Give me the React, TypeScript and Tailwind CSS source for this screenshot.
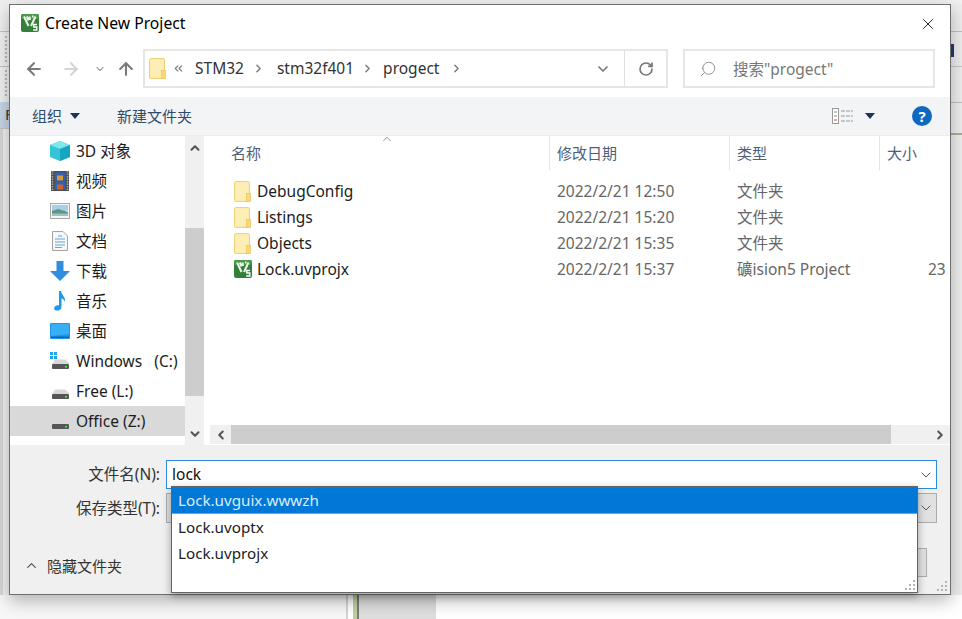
import React from "react";
import { ArrowLeft, ArrowRight, ArrowUp, ChevronDown, ChevronUp, ChevronLeft, ChevronRight, ChevronsLeft, RotateCw, Search, X } from "lucide-react";

const FONT = "font-['Noto_Sans','Noto_Sans_CJK_SC',sans-serif]";

function Folder() {
  return (
    <svg width="17" height="21" viewBox="0 0 17 21" className="shrink-0">
      <rect x="0.5" y="0.5" width="15" height="20" rx="1" fill="#fde9a0" stroke="#f0d27a" />
      <rect x="1.5" y="1.5" width="13" height="18" fill="#fdeeb5" />
      <rect x="12.5" y="12.5" width="4" height="8" fill="#fbd877" stroke="#eec766" strokeWidth="0.8" />
    </svg>
  );
}

function KeilIcon({ size = 18 }: { size?: number }) {
  return (
    <svg width={size} height={size} viewBox="0 0 18 18" className="shrink-0">
      <rect x="0" y="0" width="18" height="18" rx="2" fill="#33803a" />
      <rect x="0" y="0" width="18" height="5" rx="2" fill="#4a9a4a" />
      <path d="M3 2.5 L7.5 12 M5.8 2.5 L7.6 6.5 M8.6 2.5 L9 6 M11 2.5 L12.5 2.5 M14.5 2.5 L10 12" stroke="#eef6ec" strokeWidth="2" fill="none" />
      <path d="M16 10.5 H12.8 V13 H15.8 V16 H12.2" stroke="#ffffff" strokeWidth="1.4" fill="none" />
    </svg>
  );
}

function Cube() {
  return (
    <svg width="20" height="20" viewBox="0 0 20 20">
      <path d="M10 0 L20 4 V16 L10 20 L0 16 V4 Z" fill="#35c3d6" />
      <path d="M10 0 L20 4 L10 8 L0 4 Z" fill="#7fe6ee" />
      <path d="M10 8 L20 4 V16 L10 20 Z" fill="#16a6c4" />
    </svg>
  );
}
function Film() {
  return (
    <svg width="18" height="20" viewBox="0 0 18 20">
      <rect width="18" height="20" fill="#4f4f4f" />
      <path d="M1.5 0 V20 M16.5 0 V20" stroke="#a0a0a0" strokeWidth="1.6" strokeDasharray="1.5 1" />
      <rect x="4" y="1.5" width="10" height="8" fill="#2f62c0" />
      <rect x="4" y="10.5" width="10" height="8" fill="#2f62c0" />
      <rect x="6" y="4.5" width="6" height="5" fill="#d69a36" />
      <rect x="6" y="13.5" width="6" height="5" fill="#c8642f" />
    </svg>
  );
}
function Picture() {
  return (
    <svg width="20" height="16" viewBox="0 0 20 16">
      <rect x="0.5" y="0.5" width="19" height="15" fill="#f4f4f4" stroke="#a9a9a9" />
      <rect x="2" y="2" width="16" height="6" fill="#a8cfe8" />
      <path d="M2 8 L8 6 L18 9 V13 H2 Z" fill="#5f9482" />
      <rect x="2" y="10.5" width="16" height="2.5" fill="#9cc4c0" />
    </svg>
  );
}
function Doc() {
  return (
    <svg width="16" height="20" viewBox="0 0 16 20">
      <path d="M0.5 0.5 H11 L15.5 5 V19.5 H0.5 Z" fill="#f7f7f7" stroke="#a5a5a5" />
      <path d="M6 5 H10 M3 8 H13 M3 11 H13 M3 14 H13 M3 16.5 H10" stroke="#5aa8e0" strokeWidth="1.2" />
    </svg>
  );
}
function Download() {
  return (
    <svg width="20" height="20" viewBox="0 0 20 20">
      <path d="M6.5 0 H13.5 V10 H20 L10 20 L0 10 H6.5 Z" fill="#2f8fde" />
    </svg>
  );
}
function Music() {
  return (
    <svg width="16" height="20" viewBox="0 0 16 20">
      <path d="M7 0 H9 C9.5 4 14 6 13 11 C12 8 10.5 8 9.5 7.5 V16 C9.5 19 6 20 4 19.5 C1.5 19 1.5 15.5 4.5 14.5 C5.5 14.2 6.5 14.3 7 14.6 Z" fill="#1f9ae8" />
    </svg>
  );
}
function Desktop() {
  return (
    <svg width="20" height="16" viewBox="0 0 20 16">
      <rect width="20" height="16" rx="1" fill="#1d97ea" />
      <path d="M1 1 H19 V11 L1 13 Z" fill="#38aef5" />
      <rect x="1" y="13.5" width="18" height="1.5" fill="#0b67b0" />
    </svg>
  );
}
function Drive({ win }: { win?: boolean }) {
  return (
    <svg width="20" height="18" viewBox="0 0 20 18">
      {win && (
        <g fill="#20a4ee">
          <rect x="0" y="0" width="3" height="3" />
          <rect x="4" y="0" width="3" height="3" />
          <rect x="0" y="4" width="3" height="3" />
          <rect x="4" y="4" width="3" height="3" />
        </g>
      )}
      <path d="M3 11 L5 7.5 H15 L19 11 V12 H2 Z" fill="#d8d8d8" />
      <rect x="2" y="12" width="17" height="5" rx="1" fill="#565656" />
      <rect x="15" y="14" width="2" height="1.5" fill="#5ee05e" />
    </svg>
  );
}

const NAV: [React.ReactNode, string][] = [
  [<Cube />, "3D 对象"],
  [<Film />, "视频"],
  [<Picture />, "图片"],
  [<Doc />, "文档"],
  [<Download />, "下载"],
  [<Music />, "音乐"],
  [<Desktop />, "桌面"],
  [<Drive win />, "Windows\u00a0\u00a0 (C:)"],
  [<Drive />, "Free (L:)"],
  [<Drive />, "Office (Z:)"],
];

const FILES: [React.ReactNode, string, string, string, string][] = [
  [<Folder />, "DebugConfig", "2022/2/21 12:50", "文件夹", ""],
  [<Folder />, "Listings", "2022/2/21 15:20", "文件夹", ""],
  [<Folder />, "Objects", "2022/2/21 15:35", "文件夹", ""],
  [<KeilIcon />, "Lock.uvprojx", "2022/2/21 15:37", "礦ision5 Project", "23"],
];

function Grip() {
  return (
    <svg width="11" height="11" viewBox="0 0 11 11" fill="#b5b5b5">
      <rect x="8" y="0" width="2" height="2" />
      <rect x="4" y="4" width="2" height="2" />
      <rect x="8" y="4" width="2" height="2" />
      <rect x="0" y="8" width="2" height="2" />
      <rect x="4" y="8" width="2" height="2" />
      <rect x="8" y="8" width="2" height="2" />
    </svg>
  );
}

function Caret() {
  return (
    <svg width="10" height="6" viewBox="0 0 10 6">
      <path d="M0 0 H10 L5 6 Z" fill="#1f3557" />
    </svg>
  );
}

export default function App() {
  return (
    <div className={`${FONT} w-[962px] h-[619px] overflow-hidden flex flex-col bg-[#f0f0f0]`}>
      {/* strip above the dialog */}
      <div className="h-[4px] shrink-0 bg-[#f0f0f0]" />
      <div className="flex h-[591px] shrink-0">
        {/* application behind, left edge */}
        <div className="w-[9px] shrink-0 flex flex-col bg-[#f0f0f0] text-[#333] text-[15px] leading-none">
          <div className="h-[28px] border-b border-[#c4c4c4]" />
          <div className="h-[35px] border-b border-[#c4c4c4] pt-[4px] pl-[5px]">
            <div className="w-[2px] h-[26px] bg-[repeating-linear-gradient(#b8b8b8_0_2px,transparent_2px_4px)]" />
          </div>
          <div className="h-[35px] pt-[3px] pl-[5px]">
            <div className="w-[2px] h-[28px] bg-[repeating-linear-gradient(#b8b8b8_0_2px,transparent_2px_4px)]" />
          </div>
          <div className="h-[26px] bg-[#c6d6e8] pl-[5px] pt-[5px] overflow-hidden">F</div>
          <div className="flex-1 border-t border-[#c4c4c4]">
            <div className="w-[3px] h-full bg-[#d6d6d6]" />
          </div>
        </div>

        {/* dialog */}
        <div className="relative w-[942px] shrink-0 flex flex-col bg-white border border-[#6e6e6e] shadow-[0_6px_16px_rgba(0,0,0,0.28)] z-10">
          {/* title bar */}
          <div className="h-[33px] shrink-0 flex items-center pt-[4px] pl-[11px] pr-[13px]">
            <div className="-mt-[2px] shrink-0"><KeilIcon /></div>
            <span className="ml-[6px] text-[15.7px] text-black">Create New Project</span>
            <X className="ml-auto" size={18} strokeWidth={1.2} color="#111" />
          </div>

          {/* navigation row */}
          <div className="h-[59px] shrink-0 flex items-center pt-[2px]">
            <div className="w-[133px] shrink-0 flex items-center pl-[14px]">
              <ArrowLeft size={20} strokeWidth={2.5} color="#7a7a7a" />
              <ArrowRight className="ml-[17px]" size={20} strokeWidth={2.5} color="#d4d4d4" />
              <ChevronDown className="ml-[13px]" size={12} strokeWidth={2.5} color="#a5a5a5" />
              <ArrowUp className="ml-[10px]" size={20} strokeWidth={2.5} color="#7a7a7a" />
            </div>
            <div className="w-[525px] h-[39px] shrink-0 flex items-center border-2 border-[#e6e6e6] text-[15.5px] text-[#333]">
              <div className="ml-[4px]"><Folder /></div>
              <ChevronsLeft className="ml-[6px]" size={13} strokeWidth={2} color="#777" />
              <span className="ml-[10px]">STM32</span>
              <ChevronRight className="ml-[8px]" size={13} strokeWidth={2.5} color="#777" />
              <span className="ml-[12px]">stm32f401</span>
              <ChevronRight className="ml-[7px]" size={13} strokeWidth={2.5} color="#777" />
              <span className="ml-[9px]">progect</span>
              <ChevronRight className="ml-[11px]" size={13} strokeWidth={2.5} color="#777" />
              <ChevronDown className="ml-auto mr-[13px]" size={16} strokeWidth={2.5} color="#777" />
              <div className="w-[42px] h-full shrink-0 flex items-center justify-center border-l border-[#e0e0e0]">
                <RotateCw size={16} strokeWidth={2.5} color="#777" />
              </div>
            </div>
            <div className="ml-[15px] w-[252px] h-[39px] shrink-0 flex items-center border-2 border-[#e6e6e6] text-[15.5px] text-[#777]">
              <Search className="ml-[14px] -scale-x-100" size={18} strokeWidth={1.2} color="#888" />
              <span className="ml-[16px] pt-[2px]">搜索"progect"</span>
            </div>
          </div>

          {/* toolbar */}
          <div className="h-[39px] shrink-0 flex items-center bg-[#f3f4f6] border-b border-[#ececec] pl-[22px] text-[15px] text-[#2d4a6e]">
            <span>组织</span>
            <div className="ml-[8px]"><Caret /></div>
            <span className="ml-[37px]">新建文件夹</span>
            <svg className="ml-[640px]" width="22" height="16" viewBox="0 0 22 16">
              <rect x="0.5" y="0.5" width="6" height="15" fill="#fff" stroke="#9a9a9a" />
              <path d="M2 4 H5 M2 8 H5" stroke="#8a8a8a" />
              <path d="M2 12 H5" stroke="#d04040" />
              <path d="M9 3 H21 M9 8 H21 M9 13 H21" stroke="#9a9a9a" strokeDasharray="4 1" />
            </svg>
            <div className="ml-[11px]"><Caret /></div>
            <div className="ml-[37px] w-[20px] h-[20px] rounded-full bg-[#0e67c0] text-white text-[15px] font-bold flex items-center justify-center">?</div>
          </div>

          {/* body */}
          <div className="h-[309px] shrink-0 flex">
            <div className="w-[175px] shrink-0 flex flex-col">
              {NAV.map(([icon, label], i) => (
                <div
                  key={label}
                  className={`h-[30px] shrink-0 flex items-center text-[15.5px] text-[#1c1c1c] ${i === 9 ? "bg-[#d9d9d9]" : ""}`}
                >
                  <div className="w-[20px] ml-[40px] flex justify-center shrink-0">{icon}</div>
                  <span className="ml-[6px] pt-[2px] whitespace-pre">{label}</span>
                </div>
              ))}
            </div>
            <div className="w-[19px] shrink-0 bg-[#f0f0f0] flex flex-col items-center">
              <div className="h-[24px] flex items-center shrink-0">
                <ChevronUp size={14} strokeWidth={3.5} color="#555" />
              </div>
              <div className="mt-[68px] w-full h-[168px] shrink-0 bg-[#cdcdcd]" />
              <div className="mt-auto h-[20px] pb-[2px] flex items-center shrink-0">
                <ChevronDown size={14} strokeWidth={3.5} color="#555" />
              </div>
            </div>
            <div className="w-[4px] shrink-0 bg-white" />
            <div className="flex-1 min-w-0 flex flex-col">
              <div className="relative h-[34px] shrink-0 grid grid-cols-[341px_180px_150px_67px] text-[15px] text-[#4c607a]">
                <div className="pl-[23px] flex items-center">名称</div>
                <div className="pl-[7px] flex items-center border-l border-[#e5e5e5]">修改日期</div>
                <div className="pl-[7px] flex items-center border-l border-[#e5e5e5]">类型</div>
                <div className="pl-[7px] flex items-center border-l border-[#e5e5e5]">大小</div>
                <ChevronUp className="absolute left-[172px] -top-[4px]" size={14} strokeWidth={1.5} color="#888" />
              </div>
              <div className="h-[8px] shrink-0" />
              <div className="flex-1 min-h-0 flex flex-col">
                {FILES.map(([icon, name, date, type, size]) => (
                  <div key={name} className="h-[26px] shrink-0 grid grid-cols-[341px_180px_150px_67px] items-center text-[15.5px] text-[#666]">
                    <div className="flex items-center pl-[26px] text-[#1c1c1c]">
                      <div className="w-[18px] flex shrink-0">{icon}</div>
                      <span className="ml-[5px] pt-[2px]">{name}</span>
                    </div>
                    <div className="pl-[8px] pt-[2px]">{date}</div>
                    <div className="pl-[8px] pt-[2px]">{type}</div>
                    <div className="pl-[49px] pt-[2px]">{size}</div>
                  </div>
                ))}
              </div>
              <div className="h-[19px] shrink-0 mb-[1px] ml-[2px] flex items-center bg-[#f0f0f0]">
                <div className="w-[21px] flex justify-center shrink-0">
                  <ChevronLeft size={14} strokeWidth={3.5} color="#555" />
                </div>
                <div className="w-[660px] h-full bg-[#cdcdcd]" />
                <ChevronRight className="ml-auto mr-[3px]" size={14} strokeWidth={3.5} color="#555" />
              </div>
            </div>
          </div>

          {/* footer */}
          <div className="relative flex-1 min-h-0 bg-[#f0f0f0] text-[15.5px] text-[#333] flex flex-col">
            <div className="h-[15px] shrink-0" />
            <div className="flex items-center h-[29px] shrink-0">
              <div className="w-[150px] text-right shrink-0">文件名(N):</div>
              <div className="ml-[6px] w-[771px] h-full flex items-center bg-white border border-[#2f8ae0] pl-[5px] text-[#111]">
                <span>lock</span>
                <ChevronDown className="ml-auto mr-[2px]" size={16} strokeWidth={1.5} color="#555" />
              </div>
            </div>
            <div className="mt-[4px] flex items-center h-[30px] shrink-0">
              <div className="w-[150px] text-right shrink-0 pt-[2px]">保存类型(T):</div>
              <div className="ml-[6px] w-[771px] h-full flex items-center bg-[#e1e1e1] border border-[#adadad]">
                <ChevronDown className="ml-auto mr-[2px]" size={16} strokeWidth={1.5} color="#555" />
              </div>
            </div>
            <div className="mt-[25px] h-[29px] shrink-0 flex items-center">
              <ChevronUp className="ml-[14px] mt-[6px]" size={15} strokeWidth={2} color="#555" />
              <span className="ml-[8px] mt-[8px] text-[15px]">隐藏文件夹</span>
              <div className="ml-auto mr-[23px] w-[200px] h-full bg-[#e1e1e1] border border-[#adadad]" />
            </div>
            <div className="absolute right-[2px] bottom-[2px]"><Grip /></div>

            {/* autocomplete list */}
            <div className="absolute left-[161px] top-[41px] w-[747px] h-[107px] bg-white border border-[#646464] border-t-2 shadow-[0_3px_8px_rgba(0,0,0,0.35)] text-[15.2px] text-[#1c1c1c] z-20">
              <div className="h-[26px] bg-[#0078d7] border-b border-[#5aaeea] pl-[6px] flex items-center text-[#dcecf8]">Lock.uvguix.wwwzh</div>
              <div className="h-[26px] pl-[6px] flex items-center">Lock.uvoptx</div>
              <div className="h-[26px] pl-[6px] flex items-center">Lock.uvprojx</div>
              <div className="absolute right-[1px] bottom-[1px]"><Grip /></div>
            </div>
          </div>
        </div>

        {/* application behind, right edge */}
        <div className="flex-1 flex flex-col bg-[#ededed]">
          <div className="h-[28px] shrink-0 border-b border-[#bdbdbd]" />
          <div className="h-[35px] shrink-0 border-b border-[#c4c4c4] relative">
            <div className="absolute left-0 top-[12px] w-[3px] h-[13px] bg-[#26367a]" />
          </div>
          <div className="h-[36px] shrink-0 border-b border-[#bdbdbd]" />
          <div className="h-[32px] shrink-0 border-b-2 border-[#a9ad95]" />
        </div>
      </div>

      {/* application behind, below the dialog */}
      <div className="flex-1 flex bg-white">
        <div className="w-[346px] shrink-0 bg-[#f7f7f7]" />
        <div className="w-[2px] shrink-0 bg-[#d4d4d4]" />
        <div className="w-[5px] shrink-0 bg-white" />
        <div className="w-[4px] shrink-0 bg-[#bcd0a0]" />
        <div className="w-[2px] shrink-0 bg-[#7c7c7c]" />
        <div className="w-[77px] shrink-0 bg-[#dedede]" />
        <div className="flex-1 bg-white" />
      </div>
    </div>
  );
}
